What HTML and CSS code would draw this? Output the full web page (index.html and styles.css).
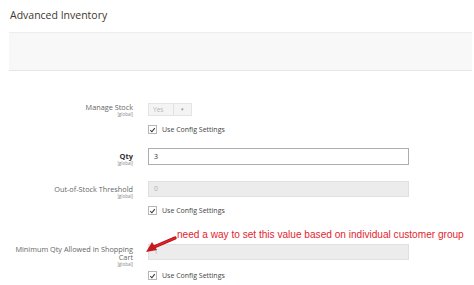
FILE: index.html
```html
<!DOCTYPE html>
<html>
<head>
<meta charset="utf-8">
<link rel="stylesheet" href="styles.css">
</head>
<body>
<h1 class="title">Advanced Inventory</h1>
<div class="band"></div>
<div class="form">
  <div class="row row-manage">
    <div class="label"><span class="name">Manage Stock</span><span class="scope">[global]</span></div>
    <div class="control">
      <div class="select"><span class="sel-val">Yes</span><span class="sel-arrow">▾</span></div>
      <label class="check"><span class="box"><svg viewBox="0 0 8 8" width="8" height="8"><path d="M1.5 4.2 L3.3 6 L6.6 1.8" fill="none" stroke="#333" stroke-width="1.2"/></svg></span>Use Config Settings</label>
    </div>
  </div>
  <div class="row row-qty">
    <div class="label"><span class="name bold">Qty</span><span class="scope">[global]</span></div>
    <div class="control">
      <div class="input">3</div>
    </div>
  </div>
  <div class="row row-thr">
    <div class="label"><span class="name">Out-of-Stock Threshold</span><span class="scope">[global]</span></div>
    <div class="control">
      <div class="input disabled">0</div>
      <label class="check"><span class="box"><svg viewBox="0 0 8 8" width="8" height="8"><path d="M1.5 4.2 L3.3 6 L6.6 1.8" fill="none" stroke="#333" stroke-width="1.2"/></svg></span>Use Config Settings</label>
    </div>
  </div>
  <div class="note">
    <svg class="arrow" viewBox="0 0 32 18" width="32" height="18">
      <path d="M30 2 L9 11" stroke="#b3121a" stroke-width="3.2" stroke-linecap="round"/>
      <path d="M30 2 L9 11" stroke="#e2232a" stroke-width="1.4" stroke-linecap="round"/>
      <path d="M1 16 L7 6 L12 14 Z" fill="#c41a20"/>
    </svg>
    <span class="note-text">need a way to set this value based on individual customer group</span>
  </div>
  <div class="row row-min">
    <div class="label"><span class="name">Minimum Qty Allowed in Shopping Cart</span><span class="scope">[global]</span></div>
    <div class="control">
      <div class="input disabled">1</div>
      <label class="check check-last"><span class="box"><svg viewBox="0 0 8 8" width="8" height="8"><path d="M1.5 4.2 L3.3 6 L6.6 1.8" fill="none" stroke="#333" stroke-width="1.2"/></svg></span>Use Config Settings</label>
    </div>
  </div>
</div>
</body>
</html>
```

FILE: styles.css
```css
html, body {
  margin: 0;
  padding: 0;
  background: #fff;
}
body {
  width: 474px;
  height: 285px;
  overflow: hidden;
  font-family: "Open Sans", "Liberation Sans", sans-serif;
  color: #333;
}
.title {
  margin: 0;
  padding: 9px 0 0 10px;
  font-size: 10.5px;
  line-height: 13px;
  font-weight: 400;
  color: #41362f;
}
.band {
  margin: 10px 2px 0 9px;
  height: 37px;
  background: #f8f8f8;
  border-top: 1px solid #ededed;
  border-bottom: 1px solid #e6e6e6;
}
.form {
  padding-top: 32px;
}
.row {
  display: grid;
  grid-template-columns: 133px 261px;
  column-gap: 15px;
}
.label {
  display: flex;
  flex-direction: column;
  align-items: flex-end;
  text-align: right;
  padding-top: 4px;
}
.name {
  font-size: 7.3px;
  line-height: 8px;
  color: #666;
}
.name.bold {
  font-weight: 700;
  color: #333;
  font-size: 7.5px;
}
.scope {
  font-size: 4.5px;
  line-height: 6px;
  color: #888;
}
.row-manage .label { padding-top: 0; }
.row-min .label { padding-top: 1px; padding-left: 12px; }
.control {
  display: flex;
  flex-direction: column;
  align-items: flex-start;
}
.select {
  display: flex;
  height: 11px;
  border: 1px solid #e4e4e4;
  background: #f4f4f4;
  font-size: 6.5px;
  line-height: 11px;
  color: #b4b4b4;
}
.sel-val {
  width: 25px;
  padding-left: 4px;
  box-sizing: border-box;
  border-right: 1px solid #e2e2e2;
}
.sel-arrow {
  width: 17px;
  text-align: center;
  font-size: 5px;
  color: #999;
}
.check {
  display: flex;
  align-items: center;
  gap: 5px;
  font-size: 7px;
  line-height: 9px;
  color: #444;
  margin-top: 9px;
}
.check-last { margin-top: 11px; }
.box {
  width: 7px;
  height: 7px;
  border: 1px solid #b6b6b6;
  background: #fff;
  display: flex;
  align-items: center;
  justify-content: center;
}
.box svg { display: block; }
.input {
  width: 261px;
  height: 17px;
  box-sizing: border-box;
  border: 1px solid #adadad;
  background: #fff;
  font-size: 7px;
  line-height: 15px;
  padding-left: 5px;
  color: #333;
}
.input.disabled {
  height: 16px;
  line-height: 14px;
  background: #ececec;
  border-color: #e0e0e0;
  color: #b0b0b0;
}
.row-qty { margin-top: 14px; }
.row-thr { margin-top: 15px; }
.row-min { margin-top: 0; }
.note {
  position: relative;
  height: 29px;
  padding-left: 177px;
}
.note-text {
  display: block;
  padding-top: 14px;
  font-family: "Liberation Sans", Arial, sans-serif;
  font-size: 10.1px;
  line-height: 12px;
  color: #e3252d;
  white-space: nowrap;
}
.arrow {
  position: absolute;
  left: 145px;
  top: 21px;
}
```
